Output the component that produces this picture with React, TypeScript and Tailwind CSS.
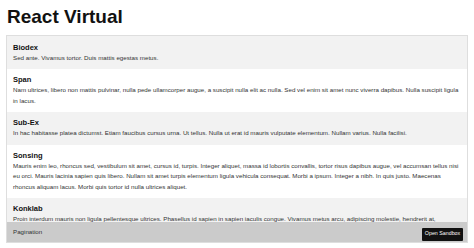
const rows = [
  {
    title: "Biodex",
    body: "Sed ante. Vivamus tortor. Duis mattis egestas metus.",
  },
  {
    title: "Span",
    body: "Nam ultrices, libero non mattis pulvinar, nulla pede ullamcorper augue, a suscipit nulla elit ac nulla. Sed vel enim sit amet nunc viverra dapibus. Nulla suscipit ligula in lacus.",
  },
  {
    title: "Sub-Ex",
    body: "In hac habitasse platea dictumst. Etiam faucibus cursus urna. Ut tellus. Nulla ut erat id mauris vulputate elementum. Nullam varius. Nulla facilisi.",
  },
  {
    title: "Sonsing",
    body: "Mauris enim leo, rhoncus sed, vestibulum sit amet, cursus id, turpis. Integer aliquet, massa id lobortis convallis, tortor risus dapibus augue, vel accumsan tellus nisi eu orci. Mauris lacinia sapien quis libero. Nullam sit amet turpis elementum ligula vehicula consequat. Morbi a ipsum. Integer a nibh. In quis justo. Maecenas rhoncus aliquam lacus. Morbi quis tortor id nulla ultrices aliquet.",
  },
  {
    title: "Konklab",
    body: "Proin interdum mauris non ligula pellentesque ultrices. Phasellus id sapien in sapien iaculis congue. Vivamus metus arcu, adipiscing molestie, hendrerit at, vulputate vitae, nisl.",
  },
];

export default function App() {
  return (
    <div className="relative h-[248px] bg-white px-[6px] pt-[5px] font-['Liberation_Sans',Arial,sans-serif] overflow-hidden">
      <h1 className="text-[19px] leading-[24px] font-bold text-[#111] pl-[1px]">
        React Virtual
      </h1>

      <div className="mt-[6px] border border-[#dedede] flex flex-col">
        <div className="h-[186px] overflow-hidden">
          {rows.map((row, i) => (
            <div
              key={row.title}
              className={`px-[6px] pt-[6.5px] pb-[6px] ${i % 2 === 0 ? "bg-[#f2f2f2]" : "bg-white"}`}
            >
              <h3 className="text-[7.5px] leading-[10px] font-bold text-[#111]">
                {row.title}
              </h3>
              <p className="text-[6.2px] leading-[10.25px] text-[#333]">
                {row.body}
              </p>
            </div>
          ))}
        </div>

        {/* footer */}
        <div className="h-[20px] bg-[#cbcbcb] flex items-center px-[6px]">
          <span className="text-[6.2px] text-[#333]">Pagination</span>
        </div>
      </div>

      {/* codesandbox overlay button */}
      <button className="absolute left-[422px] top-[228px] w-[41px] h-[12.5px] bg-[#111] rounded-[1px] text-white text-[5.3px] flex items-center justify-center">
        Open Sandbox
      </button>
    </div>
  );
}
